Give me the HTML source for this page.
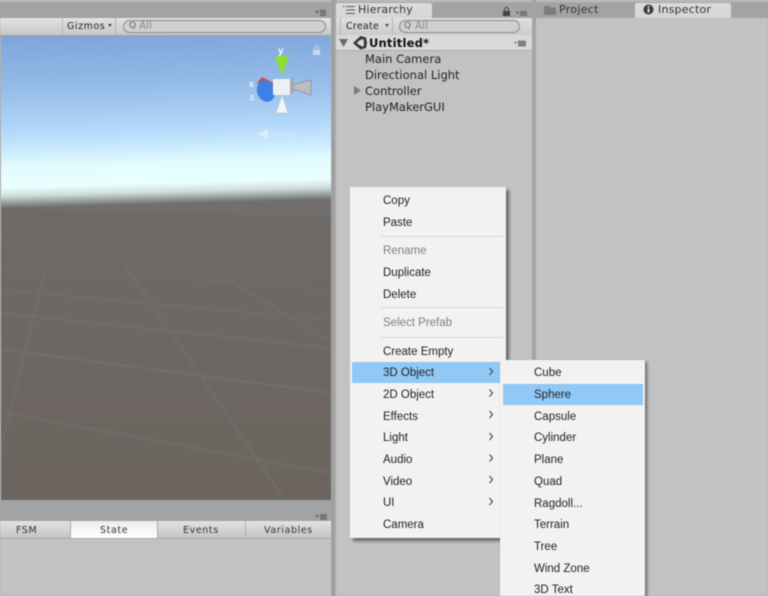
<!DOCTYPE html>
<html><head><meta charset="utf-8"><style>
html,body{margin:0;padding:0}
body{width:768px;height:596px;overflow:hidden;background:#a3a3a3;position:relative;font-family:"DejaVu Sans",sans-serif}
#w{position:absolute;left:0;top:0;width:768px;height:596px;overflow:hidden;filter:blur(.65px)}
.a{position:absolute}
.t{position:absolute;white-space:nowrap;color:#222;font-size:11.5px;line-height:16px;height:16px}
.m{position:absolute;white-space:nowrap;color:#222;font-family:"Liberation Sans",sans-serif;font-size:11.5px;line-height:16px;height:16px;margin-top:1px}
.g{color:#808080}
.s{position:absolute;height:1px;background:#d6d6d6}
.sr{position:absolute;border:1px solid #8a8a8a;border-radius:8px;background:#d0d0d0;height:11px}
</style></head><body><div id="w">
<!-- panels -->
<div class="a" style="left:0;top:0;width:768px;height:2px;background:#bdbdbd"></div>
<div class="a" style="left:0;top:18px;width:331px;height:17px;background:linear-gradient(#e2e2e2,#c8c8c8);border-bottom:1px solid #a0a0a0"></div>
<div class="a" style="left:62px;top:18px;width:1px;height:17px;background:#b8b8b8"></div>
<div class="a" style="left:115px;top:18px;width:1px;height:17px;background:#b4b4b4"></div>
<div class="t" style="left:67px;top:18.500px;font-size:9.500px;letter-spacing:.55px;color:#222">Gizmos</div>
<div class="a" style="left:108px;top:24px;border:2px solid transparent;border-top:3px solid #444"></div>
<div class="sr" style="left:123px;top:20px;width:201px"></div>
<div class="t" style="left:129px;top:18px;font-size:9px;color:#666">Q</div>
<div class="t" style="left:139px;top:18px;font-size:10.500px;color:#8c8c8c">All</div>
<svg class="a" style="left:315px;top:9px" width="11" height="8"><path d="M0 2h4L2 4.500zM5 1h6v1.200H5zM5 3.300h6v1.200H5zM5 5.600h6v1.200H5z" fill="#555"/></svg>

<!-- scene -->
<svg class="a" style="left:1px;top:36px" width="331" height="464" viewBox="0 0 331 464">
<defs>
<linearGradient id="sky" gradientUnits="userSpaceOnUse" x1="0" y1="0" x2="4.600" y2="172">
<stop offset="0" stop-color="#7fa4da"/><stop offset=".3" stop-color="#95bbe8"/><stop offset=".54" stop-color="#b0d6f9"/><stop offset=".66" stop-color="#c8e9fd"/><stop offset=".76" stop-color="#e2fbff"/><stop offset=".88" stop-color="#eaffff"/><stop offset=".93" stop-color="#d0dedc"/><stop offset=".975" stop-color="#8f9896"/><stop offset="1" stop-color="#716f6d"/>
</linearGradient>
<linearGradient id="gr" x1="0" y1="0" x2="0" y2="1"><stop offset="0" stop-color="#6f6a68"/><stop offset="1" stop-color="#6c655f"/></linearGradient>
<filter id="b1" x="-5%" y="-5%" width="110%" height="110%"><feGaussianBlur stdDeviation=".7"/></filter>
</defs>
<rect width="331" height="182" fill="url(#sky)"/>
<polygon points="0,172 331,181 331,464 0,464" fill="url(#gr)"/>
<g stroke="#7d7772" stroke-width="1.300" fill="none" filter="url(#b1)" transform="translate(-1,-36)">
<path d="M0 290 L332 320" opacity=".45"/><path d="M0 313 L332 348" opacity=".6"/><path d="M0 349 L332 393" opacity=".7"/><path d="M0 412 L332 473" opacity=".6"/><path d="M0 265 L332 290" opacity=".3"/>
<path d="M47 262 L0 453" opacity=".5"/><path d="M125 265 L285 500" opacity=".6"/><path d="M197 260 L332 343" opacity=".5"/>
</g>
<!-- gizmo -->
<g transform="translate(-1,-36)">
<polygon points="275,56 289,56 282,75" fill="#8ee02e"/>
<polygon points="311,80 311,95 293,89 289,91 289,83 293,85" fill="#b9bec2" stroke="#8a8c8e" stroke-width=".7"/>
<polygon points="282,95 276,113 288,113" fill="#f4f6f8" stroke="#b9bdc0" stroke-width=".6"/>
<polygon points="257,83 262,77 272,82 278,90 268,90" fill="#cf4d3d"/>
<polygon points="268,83 278,88 274,96 266,94" fill="#1c2c70"/>
<ellipse cx="266" cy="91" rx="9" ry="11" fill="#3f80e6" transform="rotate(-18 266 91)"/>
<rect x="273" y="79" width="17" height="16" fill="#eceff3"/>
<polygon points="290,79 294,77 294,92 290,95" fill="#a4a9ad"/>
<text x="278" y="54" font-family="Liberation Sans,sans-serif" font-size="10" font-weight="bold" fill="#f4f8ff">y</text>
<text x="249" y="87" font-family="Liberation Sans,sans-serif" font-size="9" font-weight="bold" fill="#eaf2ff">x</text>
<text x="250" y="100" font-family="Liberation Sans,sans-serif" font-size="9" font-weight="bold" fill="#eaf2ff">z</text>
<rect x="313" y="50" width="7" height="5" fill="#c8d8ee"/><path d="M314.500 50v-2a2 2 0 0 1 4 0v2" stroke="#c8d8ee" fill="none"/>
<polygon points="257,134 268,129 268,139" fill="#dcedfc"/>
<text x="269" y="138" font-family="Liberation Sans,sans-serif" font-size="10" fill="#d0e6fa">Persp</text>
</g>
</svg>

<!-- dividers -->
<div class="a" style="left:331px;top:0;width:5px;height:596px;background:#a8a8a8"></div>
<div class="a" style="left:332px;top:0;width:2px;height:596px;background:#8e8e8e;opacity:.45"></div>
<div class="a" style="left:0;top:36px;width:1px;height:464px;background:#b5b5b5"></div>

<!-- bottom panel -->
<div class="a" style="left:0;top:500px;width:331px;height:20px;background:#a3a3a3"></div>
<svg class="a" style="left:315px;top:513px" width="13" height="8"><path d="M0 2h4L2 4.500z" fill="#666"/><rect x="5" y="1" width="7" height="6" fill="#777"/></svg>
<div class="a" style="left:0;top:521px;width:331px;height:17px;background:linear-gradient(#e3e3e3,#c4c4c4);border-bottom:1px solid #aaa"></div>
<div class="a" style="left:71px;top:521px;width:86px;height:17px;background:linear-gradient(#ececec,#fff)"></div>
<div class="a" style="left:157px;top:521px;width:1px;height:17px;background:#aaa"></div>
<div class="a" style="left:245px;top:521px;width:1px;height:17px;background:#aaa"></div>
<div class="a" style="left:70px;top:521px;width:1px;height:17px;background:#aaa"></div>
<div class="a" style="left:0;top:539px;width:331px;height:57px;background:#c2c2c2"></div>
<div class="t" style="left:16px;top:522.500px;font-size:9.500px;letter-spacing:.6px;color:#333">FSM</div>
<div class="t" style="left:100px;top:522.500px;font-size:9.500px;letter-spacing:.6px;color:#333">State</div>
<div class="t" style="left:183px;top:522.500px;font-size:9.500px;letter-spacing:.6px;color:#333">Events</div>
<div class="t" style="left:264px;top:522.500px;font-size:9.500px;letter-spacing:.6px;color:#333">Variables</div>

<!-- hierarchy -->
<div class="a" style="left:336px;top:35px;width:196px;height:561px;background:#c2c2c2"></div>
<div class="a" style="left:336px;top:3px;width:96px;height:15px;background:linear-gradient(#dcdcdc,#d6d6d6);border-radius:2px 2px 0 0"></div>
<svg class="a" style="left:342px;top:5px" width="14" height="11"><path d="M1 1l1.500 1M4 1.500h9M4 5h9M4 8.500h9" stroke="#555" fill="none"/></svg>
<div class="t" style="left:358px;top:2px;font-size:11px;letter-spacing:.2px;color:#333">Hierarchy</div>
<svg class="a" style="left:502px;top:7px" width="30" height="10"><rect x="1" y="4" width="7" height="5" fill="#444"/><path d="M2.500 4V2.500a2 2 0 0 1 4 0V4" stroke="#444" fill="none"/><path d="M14 5h3l-1.500 2z" fill="#444"/><rect x="18" y="4" width="7" height="5" fill="#777"/></svg>
<div class="a" style="left:336px;top:18px;width:196px;height:17px;background:linear-gradient(#e0e0e0,#cbcbcb)"></div>
<div class="a" style="left:340px;top:18px;width:1px;height:17px;background:#b5b5b5"></div>
<div class="a" style="left:392px;top:18px;width:1px;height:17px;background:#b5b5b5"></div>
<div class="t" style="left:346px;top:18.500px;font-size:9.500px;letter-spacing:.25px;color:#222">Create</div>
<div class="a" style="left:385px;top:24px;border:2px solid transparent;border-top:3px solid #444"></div>
<div class="sr" style="left:399px;top:20px;width:119px"></div>
<div class="t" style="left:404px;top:18px;font-size:9px;color:#666">Q</div>
<div class="t" style="left:415px;top:18px;font-size:10.500px;color:#8c8c8c">All</div>
<div class="a" style="left:336px;top:35px;width:196px;height:15px;background:#d9d9d9;border-bottom:1px solid #aaa"></div>
<svg class="a" style="left:339px;top:39px" width="10" height="9"><path d="M0 0h9L4.500 8z" fill="#6a6a6a"/></svg>
<svg class="a" style="left:351px;top:35px" width="17" height="15" viewBox="0 0 17 15"><path d="M9.500 1L15 2.500 16 8 15 13 9.500 14.500 2 8zM9 5L5.500 8 9 10.500 12.500 12 13 8 12.500 4z" fill="#333" fill-rule="evenodd"/></svg>
<div class="t" style="left:369px;top:35px;font-size:11.500px;font-weight:bold;color:#111;letter-spacing:.2px">Untitled*</div>
<svg class="a" style="left:514px;top:40px" width="14" height="7"><path d="M0 2h3L1.500 4z" fill="#666"/><rect x="4" y="0.500" width="8" height="6" fill="#808080"/></svg>
<div class="t" style="left:365px;top:51px">Main Camera</div>
<div class="t" style="left:365px;top:67px">Directional Light</div>
<div class="t" style="left:365px;top:83px">Controller</div>
<svg class="a" style="left:354px;top:86px" width="8" height="10"><path d="M0 0v9l7-4.500z" fill="#7c7c7c"/></svg>
<div class="t" style="left:365px;top:99px">PlayMakerGUI</div>

<!-- right panel -->
<div class="a" style="left:532px;top:0;width:4px;height:596px;background:#a5a5a5"></div>
<div class="a" style="left:536px;top:18px;width:232px;height:578px;background:#c2c2c2"></div>
<svg class="a" style="left:544px;top:5px" width="13" height="11"><path d="M0 1h5l1 1.500h6V10H0z" fill="#7c7c7c"/></svg>
<div class="t" style="left:559px;top:2px;font-size:11px;color:#333;letter-spacing:.3px">Project</div>
<div class="a" style="left:635px;top:3px;width:96px;height:15px;background:linear-gradient(#dadada,#d6d6d6);border-radius:2px 2px 0 0"></div>
<svg class="a" style="left:643px;top:4px" width="11" height="11"><circle cx="5.500" cy="5.500" r="5" fill="#3c3c3c"/><rect x="4.500" y="4.500" width="2" height="4" fill="#ddd"/><rect x="4.500" y="2" width="2" height="1.500" fill="#ddd"/></svg>
<div class="t" style="left:658px;top:2px;font-size:11px;color:#333;letter-spacing:.2px">Inspector</div>

<!-- menu 1 -->
<div class="a" style="left:350px;top:187px;width:156px;height:351px;background:#f2f2f2;box-shadow:3px 3px 3px rgba(40,40,40,.6)"></div>
<div class="a" style="left:352px;top:362px;width:148px;height:21px;background:#90c8f6"></div>
<div class="s" style="left:380px;top:236px;width:123px"></div>
<div class="s" style="left:380px;top:307px;width:123px"></div>
<div class="s" style="left:380px;top:337px;width:123px"></div>
<div class="m" style="left:383px;top:192px">Copy</div>
<div class="m" style="left:383px;top:214px">Paste</div>
<div class="m g" style="left:383px;top:242px">Rename</div>
<div class="m" style="left:383px;top:264px">Duplicate</div>
<div class="m" style="left:383px;top:286px">Delete</div>
<div class="m g" style="left:383px;top:314px">Select Prefab</div>
<div class="m" style="left:383px;top:343px">Create Empty</div>
<div class="m" style="left:383px;top:364px">3D Object</div>
<div class="m" style="left:383px;top:386px">2D Object</div>
<div class="m" style="left:383px;top:408px">Effects</div>
<div class="m" style="left:383px;top:429px">Light</div>
<div class="m" style="left:383px;top:451px">Audio</div>
<div class="m" style="left:383px;top:473px">Video</div>
<div class="m" style="left:383px;top:494px">UI</div>
<div class="m" style="left:383px;top:516px">Camera</div>
<svg class="a" style="left:488px;top:367px" width="8" height="150" fill="none" stroke="#444" stroke-width="1.100"><path d="M1.500 1l3 3.500-3 3.500M1.500 22.500l3 3.500-3 3.500M1.500 44l3 3.500-3 3.500M1.500 66l3 3.500-3 3.500M1.500 87.500l3 3.500-3 3.500M1.500 109l3 3.500-3 3.500M1.500 131l3 3.500-3 3.500"/></svg>

<!-- menu 2 -->
<div class="a" style="left:500px;top:360px;width:145px;height:240px;background:#f2f2f2;box-shadow:2px 2px 3px rgba(40,40,40,.6)"></div>
<div class="a" style="left:503px;top:384px;width:140px;height:21px;background:#90c8f6"></div>
<div class="m" style="left:534px;top:364px">Cube</div>
<div class="m" style="left:534px;top:386px">Sphere</div>
<div class="m" style="left:534px;top:408px">Capsule</div>
<div class="m" style="left:534px;top:429px">Cylinder</div>
<div class="m" style="left:534px;top:451px">Plane</div>
<div class="m" style="left:534px;top:473px">Quad</div>
<div class="m" style="left:534px;top:495px">Ragdoll...</div>
<div class="m" style="left:534px;top:516px">Terrain</div>
<div class="m" style="left:534px;top:538px">Tree</div>
<div class="m" style="left:534px;top:560px">Wind Zone</div>
<div class="m" style="left:534px;top:581px">3D Text</div>
</div></body></html>
